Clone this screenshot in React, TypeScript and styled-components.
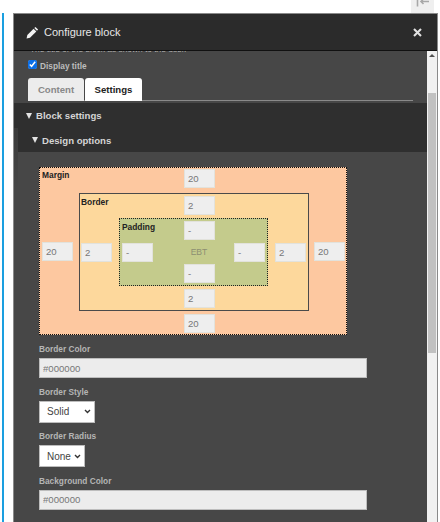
import React from "react";
import styled, { createGlobalStyle } from "styled-components";

const Global = createGlobalStyle`
  html, body { margin: 0; padding: 0; background: #fff; }
  body { font-family: "Liberation Sans", Arial, sans-serif; }
  * { box-sizing: border-box; }
`;

const Page = styled.div`
  width: 440px;
  height: 522px;
  overflow: hidden;
  display: flex;
  flex-direction: column;
`;

const TopStrip = styled.div`
  height: 13px;
  flex: none;
  display: flex;
  justify-content: flex-end;
  padding-right: 6px;
`;

const TopButton = styled.div`
  width: 23px;
  height: 13px;
  background: #efefef;
  display: flex;
  justify-content: center;
  color: #a8a8a8;
`;

const Main = styled.div`
  flex: 1;
  min-height: 0;
  display: flex;
`;

const Gutter = styled.div`
  width: 13px;
  flex: none;
  padding-left: 2px;
`;

const BlueLine = styled.div`
  width: 2px;
  height: 100%;
  background: #1a9fe0;
`;

const Dialog = styled.section`
  width: 425px;
  flex: none;
  display: flex;
  flex-direction: column;
  border: 1px solid #8a8a8a;
  border-bottom: none;
  background: #474747;
`;

const Header = styled.header`
  height: 37px;
  flex: none;
  background: #2b2b2b;
  border-bottom: 1px solid #111;
  display: flex;
  align-items: center;
  padding: 0 15px 0 12px;
  gap: 5px;
  color: #eee;
`;

const Title = styled.h1`
  flex: 1;
  margin: 0;
  font-size: 11px;
  font-weight: 400;
  color: #e6e6e6;
`;

const Body = styled.div`
  flex: 1;
  min-height: 0;
  display: grid;
  grid-template-columns: 1fr 10px;
`;

const Scroller = styled.div`
  min-width: 0;
  overflow: hidden;
`;

const ClippedLine = styled.div`
  height: 2px;
  overflow: hidden;
  display: flex;
  align-items: flex-end;
  padding-left: 16px;
  font-size: 8.4px;
  line-height: 8px;
  color: #b0b0b0;
  white-space: nowrap;
`;

const TitleCheck = styled.label`
  display: flex;
  align-items: center;
  gap: 3px;
  padding: 0 0 0 14px;
  height: 25px;
  font-size: 8.3px;
  font-weight: 700;
  color: #bdbdbd;
`;

const CheckBox = styled.input`
  width: 9px;
  height: 9px;
  margin: 0 0 2px;
  accent-color: #0b6fe8;
`;

const Tabs = styled.div`
  display: flex;
  margin: 0 14px;
  height: 23px;
  border-bottom: 1px solid #8a8a8a;
`;

const Tab = styled.div<{ $active?: boolean }>`
  height: 23px;
  display: flex;
  align-items: center;
  justify-content: center;
  width: ${(p) => (p.$active ? "57px" : "56px")};
  border-radius: 3px 3px 0 0;
  margin-right: ${(p) => (p.$active ? "0" : "1px")};
  background: ${(p) => (p.$active ? "#fff" : "#ececec")};
  color: ${(p) => (p.$active ? "#222" : "#888")};
  font-size: 9.6px;
  font-weight: 700;
`;

const SectionHeader = styled.div<{ $nested?: boolean }>`
  height: ${(p) => (p.$nested ? "24px" : "25px")};
  display: flex;
  align-items: center;
  gap: 3px;
  padding-left: ${(p) => (p.$nested ? "14px" : "12px")};
  background: #2f2f2f;
  color: #d5d5d5;
  font-size: 9.6px;
  font-weight: 700;
`;

const Outer = styled.div`
  margin-top: 2px;
`;

const Nested = styled.div`
  padding-left: 4px;
  background: linear-gradient(#3a3a3a, #474747 60px);
`;

const Triangle = styled.span`
  width: 0;
  height: 0;
  border-left: 3px solid transparent;
  border-right: 3px solid transparent;
  border-top: 6px solid #e4e4e4;
  margin-right: 1px;
`;

const Panel = styled.div`
  background: #474747;
  padding: 15px 0 0 21px;
`;

type ZoneProps = { $kind: "margin" | "border" | "padding" };

const zoneCss = {
  margin:
    "background:#fdc8a0;border:1px dotted #111;width:308px;height:168px;padding:1px 1px 1px 2px;column-gap:5px;row-gap:4px;",
  border:
    "background:#fdd89c;border:1px solid #4a4a4a;height:118px;margin:1px 0 -1px 1px;align-self:start;padding:2px 2px 2px 1px;column-gap:7px;row-gap:3px;",
  padding:
    "background:#c4cb8c;border:1px dotted #222;height:68px;padding:2px;column-gap:0;row-gap:2.5px;",
};

const Zone = styled.div<ZoneProps>`
  display: grid;
  grid-template-columns: 31px minmax(0, 1fr) 31px;
  grid-template-rows: 19px minmax(0, 1fr) 19px;
  align-items: center;
  ${(p) => zoneCss[p.$kind]}
`;

const ZoneLabel = styled.div`
  align-self: start;
  padding-top: 1px;
  font-size: 8.4px;
  font-weight: 700;
  color: #222;
  white-space: nowrap;
`;

const Cell = styled.div<{ $col: number }>`
  grid-column: ${(p) => p.$col};
  display: flex;
  justify-content: center;
  min-width: 0;
`;

const CenterCell = styled(Cell)`
  padding-left: 12px;
`;

const BoxInput = styled.input.attrs({ type: "text", readOnly: true })`
  width: 31px;
  height: 19px;
  padding: 0 3px;
  border: 1px solid #e2e2dc;
  background: #eeeeee;
  color: #777;
  font: 400 9.6px "Liberation Sans", Arial, sans-serif;
  outline: none;
`;

const CoreText = styled.div`
  font-size: 8.6px;
  color: #8d8f72;
`;

const Fields = styled.div`
  display: flex;
  flex-direction: column;
  gap: 8.5px;
  padding-top: 9px;
`;

const FieldLabel = styled.label`
  display: block;
  height: 14px;
  font-size: 8.3px;
  line-height: 10px;
  font-weight: 700;
  color: #b5b5b5;
`;

const Field = styled.div``;

const TextInput = styled.input.attrs({ type: "text", readOnly: true })`
  display: block;
  width: 328px;
  height: 20px;
  padding: 0 3px;
  border: 1px solid #bdbdbd;
  background: #ececec;
  color: #777;
  font: 400 9.6px "Liberation Sans", Arial, sans-serif;
  outline: none;
`;

const chevron =
  "data:image/svg+xml;utf8,<svg xmlns='http://www.w3.org/2000/svg' width='7' height='5' viewBox='0 0 7 5'><path d='M1 1 3.5 3.5 6 1' fill='none' stroke='%23333' stroke-width='1.4'/></svg>";

const Select = styled.select<{ $w: number }>`
  display: block;
  appearance: none;
  width: ${(p) => p.$w}px;
  height: 22px;
  padding: 0 0 0 7px;
  border: 1px solid #bdbdbd;
  border-radius: 0;
  background: #fff url("${chevron}") no-repeat right 3px center;
  color: #444;
  font: 400 10px "Liberation Sans", Arial, sans-serif;
`;

const Track = styled.div`
  background: #f1f1f1;
  display: flex;
  flex-direction: column;
  align-items: center;
  padding-top: 3px;
`;

const UpArrow = styled.span`
  width: 0;
  height: 0;
  border-left: 3px solid transparent;
  border-right: 3px solid transparent;
  border-bottom: 3px solid #505050;
`;

const Thumb = styled.div`
  width: 8px;
  height: 260px;
  margin-top: 36px;
  background: #c1c1c1;
`;

const CoreInner = styled(CoreText)`
  padding-left: 11px;
`;

const Pencil = () => (
  <svg width="13" height="13" viewBox="0 0 13 13" fill="#f2f2f2" aria-hidden="true">
    <path d="M9.4 0.9 12.1 3.6 11 4.7 8.3 2Z" />
    <path d="M7.6 2.7 10.3 5.4 4 11.7 0.6 12.4 1.3 9Z" />
  </svg>
);

const CloseIcon = () => (
  <svg width="9" height="9" viewBox="0 0 9 9" stroke="#e2e2e2" strokeWidth="2.1" aria-hidden="true">
    <path d="M1 1 8 8M8 1 1 8" />
  </svg>
);

const DockIcon = () => (
  <svg width="14" height="7" viewBox="0 0 14 7" fill="none" stroke="currentColor" strokeWidth="1.6" aria-hidden="true">
    <path d="M1.5 0V6.5M13 1.5H5M7.5 -1 5 1.5 7.5 4" />
  </svg>
);

const Box = ({
  kind,
  label,
  top,
  left,
  right,
  bottom,
  children,
}: {
  kind: ZoneProps["$kind"];
  label: string;
  top: string;
  left: string;
  right: string;
  bottom: string;
  children: React.ReactNode;
}) => (
  <Zone $kind={kind}>
    <ZoneLabel>{label}</ZoneLabel>
    <CenterCell $col={2}>
      <BoxInput value={top} />
    </CenterCell>
    <span />
    <Cell $col={1}>
      <BoxInput value={left} />
    </Cell>
    {children}
    <Cell $col={3}>
      <BoxInput value={right} />
    </Cell>
    <span />
    <CenterCell $col={2}>
      <BoxInput value={bottom} />
    </CenterCell>
    <span />
  </Zone>
);

export default function App() {
  return (
    <Page>
      <Global />
      <TopStrip>
        <TopButton>
          <DockIcon />
        </TopButton>
      </TopStrip>
      <Main>
        <Gutter>
          <BlueLine />
        </Gutter>
        <Dialog>
          <Header>
            <Pencil />
            <Title>Configure block</Title>
            <CloseIcon />
          </Header>
          <Body>
            <Scroller>
              <ClippedLine>The title of the block as shown to the user.</ClippedLine>
              <TitleCheck>
                <CheckBox type="checkbox" defaultChecked />
                Display title
              </TitleCheck>
              <Tabs>
                <Tab>Content</Tab>
                <Tab $active>Settings</Tab>
              </Tabs>
              <Outer>
                <SectionHeader>
                  <Triangle />
                  Block settings
                </SectionHeader>
                <Nested>
                  <SectionHeader $nested>
                    <Triangle />
                    Design options
                  </SectionHeader>
                  <Panel>
                    <Box kind="margin" label="Margin" top="20" left="20" right="20" bottom="20">
                      <Box kind="border" label="Border" top="2" left="2" right="2" bottom="2">
                        <Box kind="padding" label="Padding" top="-" left="-" right="-" bottom="-">
                          <Cell $col={2}>
                            <CoreInner>EBT</CoreInner>
                          </Cell>
                        </Box>
                      </Box>
                    </Box>
                    <Fields>
                      <Field>
                        <FieldLabel>Border Color</FieldLabel>
                        <TextInput value="#000000" />
                      </Field>
                      <Field>
                        <FieldLabel>Border Style</FieldLabel>
                        <Select $w={56} defaultValue="Solid">
                          <option>Solid</option>
                          <option>Dotted</option>
                        </Select>
                      </Field>
                      <Field>
                        <FieldLabel>Border Radius</FieldLabel>
                        <Select $w={46} defaultValue="None">
                          <option>None</option>
                        </Select>
                      </Field>
                      <Field>
                        <FieldLabel>Background Color</FieldLabel>
                        <TextInput value="#000000" />
                      </Field>
                    </Fields>
                  </Panel>
                </Nested>
              </Outer>
            </Scroller>
            <Track>
              <UpArrow />
              <Thumb />
            </Track>
          </Body>
        </Dialog>
      </Main>
    </Page>
  );
}
